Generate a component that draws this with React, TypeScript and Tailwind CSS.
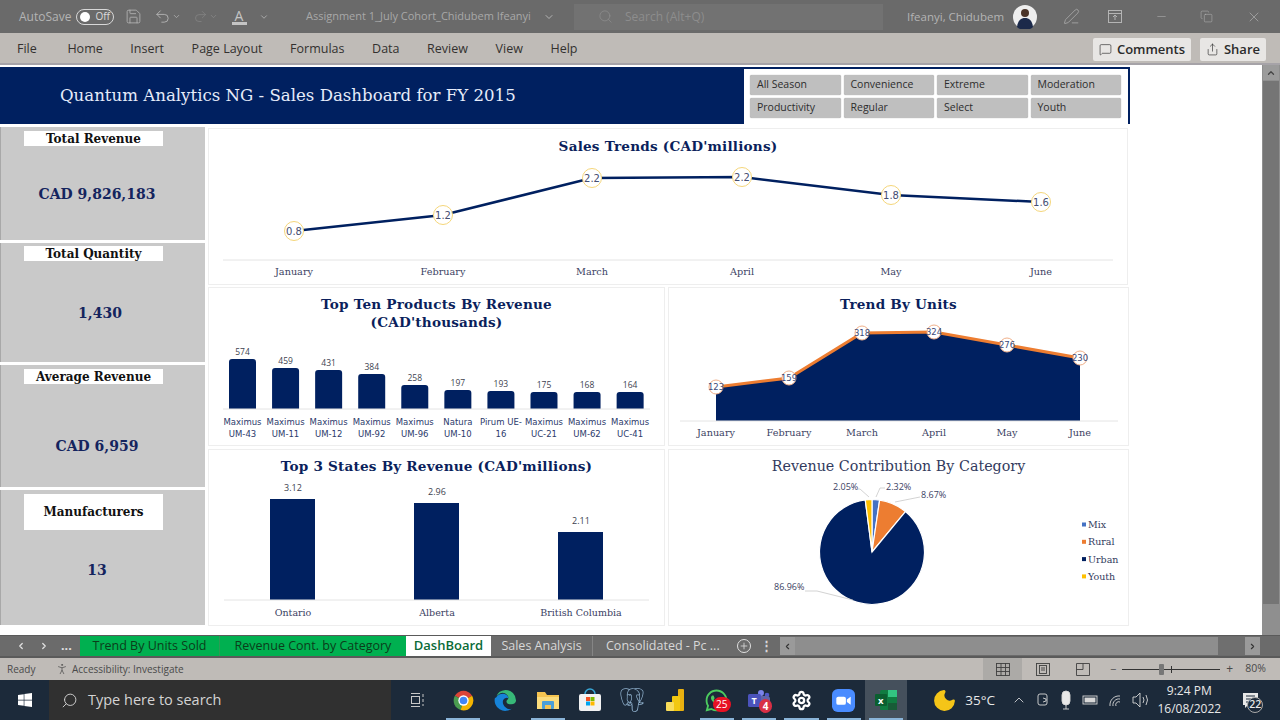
import {
  ChevronDown,
  ChevronLeft,
  ChevronRight,
  ChevronUp,
  Minus,
  Moon,
  PenLine,
  Plus,
  Save,
  Search,
  Settings,
  Undo2,
  Redo2,
  X,
  MessageSquare,
  Share,
  Copy,
  PersonStanding,
} from 'lucide-react'
import { FaWhatsapp, FaWindows } from 'react-icons/fa'
import { SiPostgresql } from 'react-icons/si'

const serif = '"DejaVu Serif", serif'
const navy = '#002060'

const menuItems = ['File', 'Home', 'Insert', 'Page Layout', 'Formulas', 'Data', 'Review', 'View', 'Help']
const slicers = ['All Season', 'Convenience', 'Extreme', 'Moderation', 'Productivity', 'Regular', 'Select', 'Youth']

const kpis = [
  { label: 'Total Revenue', value: 'CAD 9,826,183', height: 'h-[113px] pt-[4px]', valueTop: 'mt-[38px]', labelBox: 'h-[15px]' },
  { label: 'Total Quantity', value: '1,430', height: 'h-[119px] pt-[3px]', valueTop: 'mt-[42px] pl-[6px]', labelBox: 'h-[15px]' },
  { label: 'Average Revenue', value: 'CAD 6,959', height: 'h-[122px] pt-[4px]', valueTop: 'mt-[52px]', labelBox: 'h-[15px]' },
  { label: 'Manufacturers', value: '13', height: 'h-[135px] pt-[4px]', valueTop: 'mt-[30px]', labelBox: 'h-[36px]' },
]

const months = ['January', 'February', 'March', 'April', 'May', 'June']
const salesTrend = [
  { x: 86, y: 103, v: '0.8' },
  { x: 235, y: 87, v: '1.2' },
  { x: 384, y: 50, v: '2.2' },
  { x: 534, y: 49, v: '2.2' },
  { x: 683, y: 67, v: '1.8' },
  { x: 833, y: 74, v: '1.6' },
]
const products = [
  { name: ['Maximus', 'UM-43'], v: 574, h: 50 },
  { name: ['Maximus', 'UM-11'], v: 459, h: 41 },
  { name: ['Maximus', 'UM-12'], v: 431, h: 39 },
  { name: ['Maximus', 'UM-92'], v: 384, h: 35 },
  { name: ['Maximus', 'UM-96'], v: 258, h: 24 },
  { name: ['Natura', 'UM-10'], v: 197, h: 19 },
  { name: ['Pirum UE-', '16'], v: 193, h: 18 },
  { name: ['Maximus', 'UC-21'], v: 175, h: 17 },
  { name: ['Maximus', 'UM-62'], v: 168, h: 17 },
  { name: ['Maximus', 'UC-41'], v: 164, h: 17 },
]
const units = [
  { x: 48, y: 100, v: 123 },
  { x: 121, y: 91, v: 159 },
  { x: 194, y: 46, v: 318 },
  { x: 266, y: 45, v: 324 },
  { x: 339, y: 58, v: 276 },
  { x: 412, y: 71, v: 230 },
]
const states = [
  { name: 'Ontario', v: '3.12', x: 62, top: 51 },
  { name: 'Alberta', v: '2.96', x: 206, top: 55 },
  { name: 'British Columbia', v: '2.11', x: 350, top: 84 },
]
const pie = [
  { name: 'Mix', pct: 2.32, color: '#4472c4' },
  { name: 'Rural', pct: 8.67, color: '#ed7d31' },
  { name: 'Urban', pct: 86.96, color: navy },
  { name: 'Youth', pct: 2.05, color: '#ffc000' },
]

function slicePath(cx: number, cy: number, r: number, from: number, to: number) {
  const a0 = (from / 100) * Math.PI * 2
  const a1 = (to / 100) * Math.PI * 2
  const large = to - from > 50 ? 1 : 0
  return `M${cx} ${cy}L${cx + r * Math.sin(a0)} ${cy - r * Math.cos(a0)}A${r} ${r} 0 ${large} 1 ${cx + r * Math.sin(a1)} ${cy - r * Math.cos(a1)}Z`
}

function ChartTitle({ children, className = '' }: { children: React.ReactNode; className?: string }) {
  return (
    <div
      className={`text-center text-[13.6px] leading-[18px] font-bold tracking-[0.2px] text-[#0b1f5c] ${className}`}
      style={{ fontFamily: serif }}
    >
      {children}
    </div>
  )
}

function TitleBar() {
  return (
    <div className="flex h-[33px] shrink-0 items-center bg-[#6a6a6a] text-[12px] text-[#b4b4b4]">
      <span className="ml-[19px] w-[57px]">AutoSave</span>
      <div className="flex h-[16px] w-[38px] items-center justify-between rounded-full border border-[#d8d8d8] px-[3px]">
        <span className="h-[10px] w-[10px] rounded-full bg-white" />
        <span className="text-[10px] text-[#dddddd]">Off</span>
      </div>
      <Save size={17} strokeWidth={1.2} className="ml-[11px]" />
      <Undo2 size={17} strokeWidth={1.3} className="ml-[12px]" />
      <ChevronDown size={9} className="ml-[1px]" />
      <Redo2 size={15} strokeWidth={1} className="ml-[12px] text-[#8a8a8a]" />
      <ChevronDown size={9} className="ml-[1px] text-[#8a8a8a]" />
      <div className="ml-[13px] flex w-[16px] flex-col items-center text-[14px] leading-[13px] text-[#c4c4c4]">
        A<span className="h-[3px] w-[15px] bg-[#c4c4c4]" />
      </div>
      <ChevronDown size={10} className="ml-[12px]" />
      <span className="ml-[37px] w-[234px] text-[11px] whitespace-nowrap text-[#a8a8a8]">Assignment 1_July Cohort_Chidubem Ifeanyi</span>
      <ChevronDown size={12} className="ml-[3px]" />
      <div className="ml-[19px] flex h-[26px] w-[309px] items-center gap-[12px] bg-[#727272] pl-[24px] text-[#8d8d8d]">
        <Search size={15} strokeWidth={1.2} />
        <span className="text-[12px]">Search (Alt+Q)</span>
      </div>
      <span className="ml-[24px] w-[103px] text-[11.5px] whitespace-nowrap">Ifeanyi, Chidubem</span>
      <svg width="24" height="24" viewBox="0 0 24 24" className="ml-[3px]">
        <circle cx="12" cy="12" r="12" fill="#eeeeee" />
        <circle cx="12" cy="8" r="4" fill="#4a3328" />
        <path d="M4 22c1-7 4-9 8-9s7 2 8 9a12 12 0 0 1-16 0Z" fill="#1c2a4a" />
      </svg>
      <PenLine size={17} strokeWidth={1} className="ml-[26px]" />
      <svg width="14" height="13" viewBox="0 0 14 13" className="ml-[28px]" fill="none" stroke="#b4b4b4">
        <rect x="0.5" y="0.5" width="13" height="12" />
        <path d="M0 3.5h14M7 10V5M5 7l2-2 2 2" />
      </svg>
      <Minus size={13} strokeWidth={1} className="ml-[33px]" />
      <Copy size={13} strokeWidth={1} className="ml-[32px]" />
      <X size={16} strokeWidth={1} className="ml-[33px]" />
    </div>
  )
}

function MenuBar() {
  return (
    <div className="flex h-[32px] shrink-0 items-center justify-between border-b-2 border-b-[#a6a3a8] bg-[#bfbbb7] pt-[3px] pr-[14px] pl-[17px]">
      <div className="flex gap-[27.6px] text-[12.5px] text-[#33312f]">
        {menuItems.map((item) => (
          <span key={item} className="first:mr-[3px]">
            {item}
          </span>
        ))}
      </div>
      <div className="flex gap-[9px] text-[13px] font-semibold text-[#2b2b2b]">
        <div className="flex h-[23px] w-[98px] items-center justify-center gap-[5px] rounded-[2px] bg-[#e8e6e4]">
          <MessageSquare size={13} strokeWidth={1.2} />
          Comments
        </div>
        <div className="flex h-[23px] w-[66px] items-center justify-center gap-[5px] rounded-[2px] bg-[#e8e6e4]">
          <Share size={13} strokeWidth={1.2} />
          Share
        </div>
      </div>
    </div>
  )
}

function Header() {
  return (
    <div className="flex h-[57px] w-[1130px] shrink-0">
      <div
        className="flex w-[744px] items-center bg-[#002060] pt-[2px] pl-[60px] text-[16.6px] text-[#e6ecfa]"
        style={{ fontFamily: serif }}
      >
        Quantum Analytics NG - Sales Dashboard for FY 2015
      </div>
      <div className="grid flex-1 grid-cols-4 content-center gap-x-[3px] gap-y-[3px] border-t-2 border-r-2 border-[#002060] pr-[7px] pl-[6px]">
        {slicers.map((s) => (
          <div
            key={s}
            className="flex h-[20px] items-center rounded-[2px] bg-[#bfbfbf] pl-[7px] text-[10.5px] text-[#2d2d2d] shadow-[0_0_1px_#8a8a8a]"
          >
            {s}
          </div>
        ))}
      </div>
    </div>
  )
}

function KpiColumn() {
  return (
    <div className="flex w-[205px] shrink-0 flex-col gap-[3px]">
      {kpis.map((k) => (
        <div key={k.label} className={`flex flex-col border-l border-l-[#a8a8a8] bg-[#c9c9c9] pl-[23px] ${k.height}`}>
          <div
            className={`flex w-[139px] items-center justify-center bg-white text-[12px] font-bold text-[#111111] ${k.labelBox}`}
            style={{ fontFamily: serif }}
          >
            {k.label}
          </div>
          <div
            className={`w-[146px] text-center text-[14px] leading-[20px] font-bold text-[#14245e] ${k.valueTop}`}
            style={{ fontFamily: serif }}
          >
            {k.value}
          </div>
        </div>
      ))}
    </div>
  )
}

function SalesTrends() {
  return (
    <div className="h-[157px] w-[920px] border border-[#eeeeee] bg-white pt-[8px]">
      <ChartTitle>Sales Trends (CAD'millions)</ChartTitle>
      <svg width="918" height="129" viewBox="1 27 918 129" className="block" style={{ fontFamily: serif }}>
        <line x1="15" y1="132" x2="905" y2="132" stroke="#e4e4e4" />
        <polyline points={salesTrend.map((p) => `${p.x},${p.y}`).join(' ')} fill="none" stroke={navy} strokeWidth="2.5" />
        {salesTrend.map((p, i) => (
          <g key={months[i]}>
            <circle cx={p.x} cy={p.y} r="9.5" fill="white" stroke="#f5d67a" />
            <text x={p.x} y={p.y + 3.5} textAnchor="middle" fontSize="10" fill="#454e72" fontFamily="'DejaVu Sans', sans-serif">
              {p.v}
            </text>
            <text x={p.x} y="147" textAnchor="middle" fontSize="9.7" fill="#3b4263">
              {months[i]}
            </text>
          </g>
        ))}
      </svg>
    </div>
  )
}

function TopProducts() {
  return (
    <div className="h-[159px] w-[457px] border border-[#eeeeee] bg-white pt-[7px]">
      <ChartTitle>
        Top Ten Products By Revenue
        <br />
        (CAD'thousands)
      </ChartTitle>
      <svg width="455" height="114" viewBox="0 1 455 114" className="block">
        {products.map((p, i) => {
          const x = 20 + i * 43.07
          const top = 79 - p.h
          return (
            <g key={p.v}>
              <path d={`M${x} 79V${top + 3}Q${x} ${top} ${x + 3} ${top}H${x + 24}Q${x + 27} ${top} ${x + 27} ${top + 3}V79Z`} fill={navy} />
              <text x={x + 13.5} y={top - 4} textAnchor="middle" fontSize="8.5" fill="#3d3f4f" fontFamily="'Open Sans', sans-serif">
                {p.v}
              </text>
              <text x={x + 13.5} y="95" textAnchor="middle" fontSize="8.5" fill="#2c3a6b" fontFamily="'DejaVu Sans', sans-serif">
                {p.name[0]}
              </text>
              <text x={x + 13.5} y="107" textAnchor="middle" fontSize="8.5" fill="#2c3a6b" fontFamily="'DejaVu Sans', sans-serif">
                {p.name[1]}
              </text>
            </g>
          )
        })}
        <line x1="14" y1="79" x2="441" y2="79" stroke="#e4e4e4" />
      </svg>
    </div>
  )
}

function TrendUnits() {
  const line = units.map((p) => `${p.x},${p.y}`).join(' ')
  return (
    <div className="h-[159px] flex-1 border border-[#eeeeee] bg-white pt-[7px]">
      <ChartTitle>Trend By Units</ChartTitle>
      <svg width="458" height="132" viewBox="1 26 458 132" className="block" style={{ fontFamily: serif }}>
        <polygon points={`48,134 ${line} 412,134`} fill={navy} />
        <polyline points={line} fill="none" stroke="#ed7d31" strokeWidth="3" />
        <line x1="12" y1="134" x2="450" y2="134" stroke="#e4e4e4" />
        {units.map((p, i) => (
          <g key={p.v}>
            <circle cx={p.x} cy={p.y} r="7" fill="white" stroke="#f0b08a" />
            <text x={p.x} y={p.y + 3} textAnchor="middle" fontSize="8.5" fill="#3d4a78" fontFamily="'DejaVu Sans', sans-serif">
              {p.v}
            </text>
            <text x={p.x} y="149" textAnchor="middle" fontSize="9.7" fill="#3b4263">
              {months[i]}
            </text>
          </g>
        ))}
      </svg>
    </div>
  )
}

function TopStates() {
  return (
    <div className="h-[177px] w-[457px] border border-[#eeeeee] bg-white pt-[7px]">
      <ChartTitle>Top 3 States By Revenue (CAD'millions)</ChartTitle>
      <svg width="455" height="150" viewBox="0 26 455 150" className="block">
        {states.map((s) => (
          <g key={s.name}>
            <rect x={s.x - 1} y={s.top - 1} width="45" height={152 - s.top} fill={navy} />
            <text x={s.x + 22} y={s.top - 9} textAnchor="middle" fontSize="9" fill="#3d3f4f" fontFamily="'Open Sans', sans-serif">
              {s.v}
            </text>
            <text x={s.x + 22} y="167" textAnchor="middle" fontSize="9.5" fill="#3b4263" fontFamily={serif}>
              {s.name}
            </text>
          </g>
        ))}
        <line x1="15" y1="151" x2="440" y2="151" stroke="#e4e4e4" />
      </svg>
    </div>
  )
}

function CategoryPie() {
  let start = 0
  const cx = 203
  const cy = 76
  return (
    <div className="h-[177px] flex-1 border border-[#eeeeee] bg-white pt-[7px]">
      <div className="text-center text-[14.3px] leading-[18px] text-[#333b5e]" style={{ fontFamily: serif }}>
        Revenue Contribution By Category
      </div>
      <svg width="458" height="150" viewBox="0 25 458 150" className="block" style={{ fontFamily: serif }}>
        <g transform="translate(0 26)">
          {pie.map((s) => {
            const d = slicePath(cx, cy, 52.5, start, start + s.pct)
            start += s.pct
            return <path key={s.name} d={d} fill={s.color} stroke="white" strokeWidth="1.2" />
          })}
          <path d="M189 13h2l9 8M216 12h-5l-4 9M226 26L251 21M136 115h12L184 124" fill="none" stroke="#c8c8c8" strokeWidth="0.8" />
        </g>
        <g fontSize="9" fill="#3b4263" fontFamily="'Open Sans', sans-serif">
          <text x="164" y="40">2.05%</text>
          <text x="217" y="40">2.32%</text>
          <text x="252" y="48">8.67%</text>
          <text x="105" y="140">86.96%</text>
        </g>
        {pie.map((s, i) => (
          <g key={s.name}>
            <rect x="413" y={72.5 + i * 17.3} width="4" height="4" fill={s.color} />
            <text x="419" y={78 + i * 17.3} fontSize="9.5" fill="#333b5e">
              {s.name}
            </text>
          </g>
        ))}
      </svg>
    </div>
  )
}

function VerticalScroll() {
  return (
    <div className="flex w-[18px] shrink-0 flex-col items-center bg-[#8f8f8f]">
      <div className="flex h-[15px] w-[16px] items-center justify-center bg-[#9b9b9b] text-[#444444]">
        <ChevronUp size={10} strokeWidth={3} />
      </div>
      <div className="mt-[1px] h-[523px] w-[16px] bg-[#757575]" />
    </div>
  )
}

function SheetTabs() {
  return (
    <div className="flex h-[23px] shrink-0 items-stretch border-t border-b-2 border-[#5a5a5a] bg-[#6b6b6b] text-[12.5px] text-[#d8d8d8]">
      <div className="flex w-[80px] items-center pl-[16px] text-[#e0e0e0]">
        <ChevronLeft size={10} strokeWidth={3} />
        <ChevronRight size={10} strokeWidth={3} className="ml-[13px]" />
        <span className="ml-[12px] font-bold">...</span>
      </div>
      <div className="flex w-[140px] items-center justify-center border-r border-[#2d9a55] bg-[#00b050] text-[#0b3d1a]">Trend By Units Sold</div>
      <div className="flex w-[186px] items-center justify-center bg-[#00b050] text-[#0b3d1a]">Revenue Cont. by Category</div>
      <div className="flex w-[85px] items-center justify-center bg-white text-[13px] font-semibold text-[#0b6b38]">DashBoard</div>
      <div className="flex w-[102px] items-center justify-center border-r border-[#858585]">Sales Analysis</div>
      <span className="ml-[13px] flex w-[127px] items-center whitespace-nowrap">Consolidated - Pc ...</span>
      <div className="flex w-[22px] items-center justify-center">
        <span className="flex h-[14px] w-[14px] items-center justify-center rounded-full border border-[#e0e0e0]">
          <Plus size={10} />
        </span>
      </div>
      <span className="flex w-[22px] items-center justify-center font-bold">⋮</span>
      <div className="ml-[3px] flex w-[480px] items-stretch py-[1px]">
        <span className="flex w-[15px] items-center justify-center bg-[#9a9a9a] text-[#333333]">
          <ChevronLeft size={9} strokeWidth={3} />
        </span>
        <span className="flex-1 bg-[#8e8e8e]" />
        <span className="w-[27px] bg-[#6f6f6f]" />
        <span className="flex w-[15px] items-center justify-center bg-[#9a9a9a] text-[#333333]">
          <ChevronRight size={9} strokeWidth={3} />
        </span>
      </div>
    </div>
  )
}

function StatusBar() {
  return (
    <div className="flex h-[22px] shrink-0 items-center bg-[#bfbbb7] text-[10px] text-[#4a4a4a]">
      <span className="ml-[7px] w-[48px]">Ready</span>
      <PersonStanding size={14} strokeWidth={1.2} />
      <span className="ml-[3px] w-[911px]">Accessibility: Investigate</span>
      <div className="flex h-full w-[39px] items-center justify-center bg-[#acaaa7]">
        <svg width="14" height="13" viewBox="0 0 14 13" fill="none" stroke="#3f3f3f" strokeWidth="0.9">
          <rect x="0.5" y="0.5" width="13" height="12" />
          <path d="M5 0v13M9.5 0v13M0 4.5h14M0 8.5h14" />
        </svg>
      </div>
      <div className="flex w-[41px] justify-center">
        <svg width="14" height="13" viewBox="0 0 14 13" fill="none" stroke="#3f3f3f" strokeWidth="0.9">
          <rect x="0.5" y="0.5" width="13" height="12" />
          <rect x="3.5" y="2.5" width="7" height="8" />
          <path d="M5 5h4M5 7h4" />
        </svg>
      </div>
      <div className="flex w-[39px] justify-center">
        <svg width="14" height="13" viewBox="0 0 14 13" fill="none" stroke="#3f3f3f" strokeWidth="0.9">
          <path d="M0.5 12.5V0.5h13v12ZM7 0.5v6H0.5" />
        </svg>
      </div>
      <span className="ml-[8px] text-[11px]">−</span>
      <div className="relative ml-[6px] h-[1px] w-[98px] bg-[#333333]">
        <span className="absolute top-[-5px] left-[37px] h-[11px] w-[5px] rounded-[1px] bg-[#777777]" />
        <span className="absolute top-[-3px] left-[49px] h-[7px] w-[1px] bg-[#333333]" />
      </div>
      <span className="ml-[6px] text-[12px]">+</span>
      <span className="ml-[12px] text-[10.5px]">80%</span>
    </div>
  )
}

function AppSlot({ children, open, active }: { children: React.ReactNode; open?: boolean; active?: boolean }) {
  return (
    <div className={`relative flex h-full w-[42.3px] items-center justify-center ${active ? 'bg-[#45505c]' : ''}`}>
      {children}
      {open && <span className="absolute right-[4px] bottom-0 left-[4px] h-[2px] bg-[#8ab4d8]" />}
    </div>
  )
}

function Taskbar() {
  return (
    <div className="flex h-[40px] shrink-0 items-center bg-[#1c2a3a] text-[#e8e8e8]">
      <div className="flex w-[49px] justify-center">
        <FaWindows size={16} className="text-white" />
      </div>
      <div className="flex h-full w-[342px] items-center bg-[#303030] pl-[12px] text-[14.5px] text-[#d4d4d4]">
        <Search size={17} strokeWidth={1.3} className="-scale-x-100" />
        <span className="ml-[10px]">Type here to search</span>
      </div>
      <div className="flex w-[51px] justify-center">
        <svg width="16" height="16" viewBox="0 0 16 16" fill="none" stroke="#c8c8c8">
          <rect x="2.5" y="4.5" width="8" height="7" />
          <path d="M2 1.5h9M2 14.5h9M14 2v3M14 7v3M14 12v2" />
        </svg>
      </div>
      <AppSlot open>
        <svg width="23" height="23" viewBox="0 0 24 24">
          <path d="M12 12 3 7a10.5 10.5 0 0 1 18 0Z" fill="#db4437" />
          <path d="M12 12 3 7a10.5 10.5 0 0 0 6 15Z" fill="#4a9c4f" />
          <path d="M12 12 21 7a10.5 10.5 0 0 1-12 15Z" fill="#f4b400" />
          <circle cx="12" cy="12" r="5.4" fill="white" />
          <circle cx="12" cy="12" r="4" fill="#4285f4" />
        </svg>
      </AppSlot>
      <AppSlot>
        <svg width="23" height="23" viewBox="0 0 24 24">
          <path d="M12 1a11 11 0 0 1 11 11c0 2-2 4-5 4s-5-1-5-3 2-2 2-4-3-5-6-5-6 3-7 5a11 11 0 0 1 10-8Z" fill="#37b878" />
          <path d="M2 9c2-3 5-4 7-4 3 0 6 2 6 5-1-1-2-1-4 0-3 2-2 7 1 9 2 2 5 3 7 1a11 11 0 0 1-18-11Z" fill="#1683d8" />
        </svg>
      </AppSlot>
      <AppSlot open>
        <svg width="24" height="22" viewBox="0 0 24 22">
          <path d="M1 3h8l2 3h12v14H1Z" fill="#f5c451" />
          <path d="M1 8h22v12H1Z" fill="#fbdc7c" />
          <rect x="6" y="12" width="12" height="8" rx="1" fill="#4a9fd8" />
          <rect x="9" y="16" width="6" height="4" fill="#f5c451" />
        </svg>
      </AppSlot>
      <AppSlot>
        <svg width="24" height="24" viewBox="0 0 24 24">
          <path d="M7 6a5 5 0 0 1 10 0" fill="none" stroke="#38a8d8" strokeWidth="1.5" />
          <rect x="1" y="6" width="22" height="17" rx="2" fill="#f2f2f2" />
          <rect x="8" y="9" width="4" height="4" fill="#f25022" />
          <rect x="12.5" y="9" width="4" height="4" fill="#7fba00" />
          <rect x="8" y="13.5" width="4" height="4" fill="#00a4ef" />
          <rect x="12.5" y="13.5" width="4" height="4" fill="#ffb900" />
        </svg>
      </AppSlot>
      <AppSlot>
        <SiPostgresql size={24} className="text-[#8fb0cc]" />
      </AppSlot>
      <AppSlot>
        <svg width="20" height="24" viewBox="0 0 20 24">
          <rect x="13" y="1" width="6" height="22" rx="1" fill="#e8b010" />
          <rect x="7" y="8" width="8" height="15" rx="1" fill="#f2c811" />
          <rect x="1" y="14" width="8" height="9" rx="1" fill="#f9dd5a" />
        </svg>
      </AppSlot>
      <AppSlot open>
        <FaWhatsapp size={25} className="text-[#4ccb5f]" />
        <span className="absolute top-[17px] left-[17px] flex h-[15px] w-[18px] items-center justify-center rounded-full bg-[#e81123] text-[10px] text-white">25</span>
      </AppSlot>
      <AppSlot open>
        <svg width="24" height="22" viewBox="0 0 24 22">
          <circle cx="14" cy="4" r="3" fill="#7b83eb" />
          <circle cx="20" cy="6" r="2.3" fill="#5059c9" />
          <rect x="9" y="7" width="14" height="11" rx="3" fill="#6264a7" />
          <rect x="1" y="5" width="13" height="13" rx="1.5" fill="#4b53bc" />
          <text x="4.5" y="15" fontSize="9" fontWeight="700" fill="white" fontFamily="'Open Sans', sans-serif">T</text>
        </svg>
        <span className="absolute top-[19px] left-[21px] flex h-[14px] w-[13px] items-center justify-center rounded-full bg-[#d92f45] text-[10px] font-bold text-white">4</span>
      </AppSlot>
      <AppSlot open>
        <Settings size={21} strokeWidth={2.6} className="text-white" />
      </AppSlot>
      <AppSlot open>
        <svg width="23" height="23" viewBox="0 0 24 24">
          <rect width="24" height="24" rx="6" fill="#4a8cff" />
          <rect x="4.5" y="8" width="10" height="8.5" rx="2" fill="white" />
          <path d="m15.5 11 4-3v8.5l-4-3Z" fill="white" />
        </svg>
      </AppSlot>
      <AppSlot open active>
        <svg width="24" height="22" viewBox="0 0 24 22">
          <rect x="6" y="1" width="17" height="20" rx="1.5" fill="#107c41" />
          <rect x="14" y="1" width="9" height="7" fill="#33c481" />
          <rect x="14" y="14" width="9" height="7" fill="#185c37" />
          <rect x="1" y="5" width="12" height="12" rx="1" fill="#0b5f30" />
          <text x="4" y="14.5" fontSize="9.5" fontWeight="700" fill="white" fontFamily="'Open Sans', sans-serif">x</text>
        </svg>
      </AppSlot>
      <Moon size={25} fill="#f5c518" stroke="#f5c518" className="ml-[25px]" />
      <span className="ml-[8px] w-[46px] text-[13.5px]">35°C</span>
      <ChevronUp size={16} strokeWidth={1.2} />
      <svg width="124" height="20" viewBox="0 0 124 20" fill="none" stroke="#d8d8d8" strokeWidth="0.9" className="ml-[9px]">
        <rect x="2" y="4" width="9" height="11" rx="2" />
        <path d="M7 8l3 1v2l-3 1" />
        <rect x="26" y="1" width="8" height="14" rx="4" fill="#e8e8e8" />
        <path d="M30 15v4M27 19h6" />
        <rect x="47" y="6" width="14" height="8" />
        <rect x="49" y="8" width="10" height="4" fill="#d8d8d8" />
        <path d="M74 16a9 9 0 0 1 10-10M77 16a6 6 0 0 1 7-7M80 16a3 3 0 0 1 4-4" />
        <path d="M97 7h3l4-4v14l-4-4h-3ZM107 7q2 3 0 6M110 5q3 5 0 10" />
      </svg>
      <div className="-ml-[7px] flex w-[72px] flex-col items-center text-[12px] leading-[18px]">
        <span>9:24 PM</span>
        <span>16/08/2022</span>
      </div>
      <div className="relative ml-[10px] flex w-[30px] justify-center">
        <svg width="17" height="17" viewBox="0 0 17 17">
          <path d="M1 1h15v12H6l-3 3v-3H1Z" fill="#e8e8e8" />
          <path d="M4 4h9M4 7h9M4 10h6" stroke="#1c2a3a" />
        </svg>
        <span className="absolute top-[5px] left-[12px] flex h-[16px] w-[16px] items-center justify-center rounded-full border border-[#aaaaaa] bg-[#1c2a3a] text-[10.5px] font-semibold">22</span>
      </div>
    </div>
  )
}

export default function App() {
  return (
    <div className="flex h-[720px] w-[1280px] flex-col overflow-hidden" style={{ fontFamily: '"Open Sans", "Noto Sans", sans-serif' }}>
      <TitleBar />
      <MenuBar />
      <div className="flex h-[570px] shrink-0 bg-white">
        <div className="flex flex-1 flex-col pt-[2px]">
          <Header />
          <div className="mt-[3px] flex w-[1129px] gap-[3px]">
            <KpiColumn />
            <div className="flex flex-1 flex-col gap-[2px] pt-[1px]">
              <SalesTrends />
              <div className="flex gap-[3px]">
                <TopProducts />
                <TrendUnits />
              </div>
              <div className="mt-[1px] flex gap-[3px]">
                <TopStates />
                <CategoryPie />
              </div>
            </div>
          </div>
        </div>
        <VerticalScroll />
      </div>
      <SheetTabs />
      <StatusBar />
      <Taskbar />
    </div>
  )
}
